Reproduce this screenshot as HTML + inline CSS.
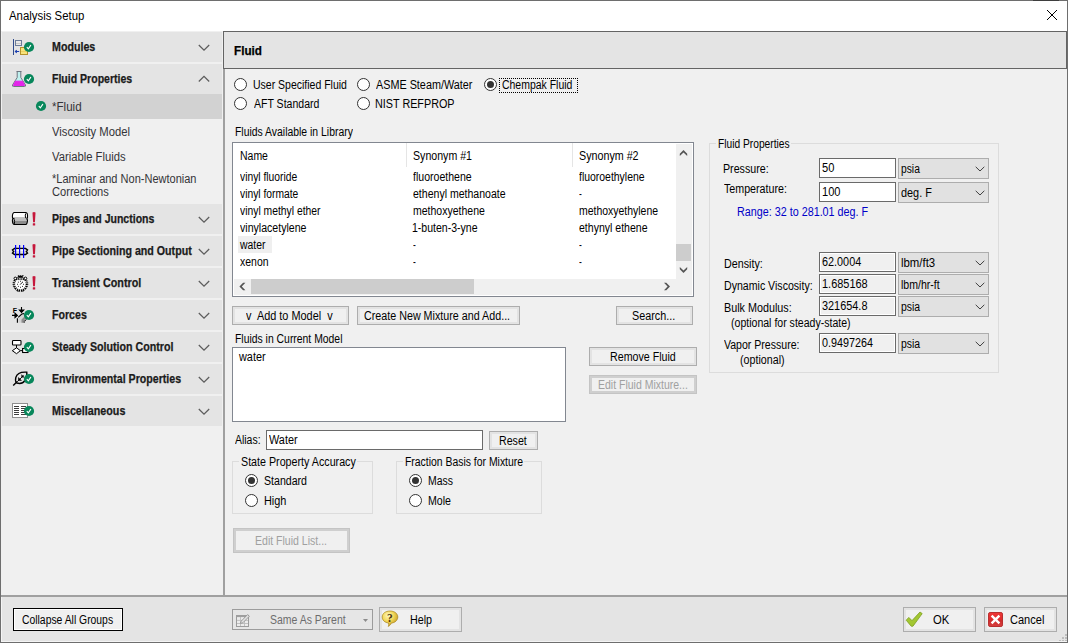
<!DOCTYPE html>
<html><head><meta charset="utf-8"><title>Analysis Setup</title>
<style>
html,body{margin:0;padding:0;background:#fff;}
#win{position:relative;width:1068px;height:643px;overflow:hidden;background:#f0f0f0;font-family:"Liberation Sans",sans-serif;font-size:11px;color:#000;}
#win div,#win svg{position:absolute;box-sizing:border-box;}
.t{position:absolute;white-space:pre;line-height:1;transform-origin:0 0;display:block;}
.row{left:2px;width:220px;height:30px;background:#e4e4e4;}
.btn{border:1px solid #adadad;background:#f0f0f0;box-shadow:inset 0 0 0 2px #e3e3e3;}
.btn.dis{border:1px solid #c4c4c4;box-shadow:inset 0 0 0 2px #cfcfcf;}
.rad{width:13px;height:13px;border-radius:50%;border:1px solid #333;background:#fff;}
.rad.on::after{content:"";position:absolute;left:2px;top:2px;width:7px;height:7px;border-radius:50%;background:#333;}
.lb{border:1px solid #828790;background:#fff;}
.gb{border:1px solid #dcdcdc;}
.inp{border:1px solid #6a6a6a;background:#fff;}
.ro{border:1px solid #6a6a6a;background:#f0f0f0;box-shadow:inset 1px 1px 0 #fff, inset -1px -1px 0 #fff;}
.dd{border:1px solid #adadad;background:#e1e1e1;}
.gl{background:#f0f0f0;height:13px;}

</style></head>
<body>
<div id="win">
<div style="left:1px;top:1px;width:1066px;height:30px;background:#fff"></div>
<svg style="left:1046px;top:9px" width="12" height="12" viewBox="0 0 12 12"><path d="M1 1 L11 11 M11 1 L1 11" stroke="#000" stroke-width="1" fill="none"/></svg>
<div class="row" style="top:32px"></div>
<svg style="left:198px;top:44px" width="12" height="8" viewBox="0 0 12 8"><path d="M0.8 1 L6 6.2 L11.2 1" stroke="#5c5c5c" stroke-width="1.25" fill="none"/></svg>
<div class="row" style="top:64px"></div>
<svg style="left:198px;top:75px" width="12" height="8" viewBox="0 0 12 8"><path d="M0.8 6.5 L6 1.3 L11.2 6.5" stroke="#5c5c5c" stroke-width="1.25" fill="none"/></svg>
<div class="row" style="top:204px"></div>
<svg style="left:198px;top:216px" width="12" height="8" viewBox="0 0 12 8"><path d="M0.8 1 L6 6.2 L11.2 1" stroke="#5c5c5c" stroke-width="1.25" fill="none"/></svg>
<div class="row" style="top:236px"></div>
<svg style="left:198px;top:248px" width="12" height="8" viewBox="0 0 12 8"><path d="M0.8 1 L6 6.2 L11.2 1" stroke="#5c5c5c" stroke-width="1.25" fill="none"/></svg>
<div class="row" style="top:268px"></div>
<svg style="left:198px;top:280px" width="12" height="8" viewBox="0 0 12 8"><path d="M0.8 1 L6 6.2 L11.2 1" stroke="#5c5c5c" stroke-width="1.25" fill="none"/></svg>
<div class="row" style="top:300px"></div>
<svg style="left:198px;top:312px" width="12" height="8" viewBox="0 0 12 8"><path d="M0.8 1 L6 6.2 L11.2 1" stroke="#5c5c5c" stroke-width="1.25" fill="none"/></svg>
<div class="row" style="top:332px"></div>
<svg style="left:198px;top:344px" width="12" height="8" viewBox="0 0 12 8"><path d="M0.8 1 L6 6.2 L11.2 1" stroke="#5c5c5c" stroke-width="1.25" fill="none"/></svg>
<div class="row" style="top:364px"></div>
<svg style="left:198px;top:376px" width="12" height="8" viewBox="0 0 12 8"><path d="M0.8 1 L6 6.2 L11.2 1" stroke="#5c5c5c" stroke-width="1.25" fill="none"/></svg>
<div class="row" style="top:396px"></div>
<svg style="left:198px;top:408px" width="12" height="8" viewBox="0 0 12 8"><path d="M0.8 1 L6 6.2 L11.2 1" stroke="#5c5c5c" stroke-width="1.25" fill="none"/></svg>
<div style="left:2px;top:94px;width:220px;height:25px;background:#d2d2d2"></div>
<div style="left:223px;top:31px;width:844px;height:38px;border:1px solid #646464;background:#e4e4e4"></div>
<div style="left:223px;top:69px;width:2px;height:527px;background:#a0a0a0"></div>
<div style="left:1px;top:595px;width:1066px;height:2px;background:#a0a0a0"></div>
<div style="left:1px;top:597px;width:1066px;height:45px;background:#e4e4e4"></div>
<div class="rad" style="left:234px;top:78px"></div>
<div class="rad" style="left:234px;top:97px"></div>
<div class="rad" style="left:357px;top:78px"></div>
<div class="rad" style="left:357px;top:97px"></div>
<div class="rad on" style="left:484px;top:78px"></div>
<div class="rad on" style="left:245px;top:474px"></div>
<div class="rad" style="left:245px;top:494px"></div>
<div class="rad on" style="left:409px;top:474px"></div>
<div class="rad" style="left:409px;top:494px"></div>
<div style="left:499px;top:78px;width:79px;height:15px;border:1px dotted #000"></div>
<div class="lb" style="left:232px;top:142px;width:462px;height:155px"></div>
<div style="left:406px;top:143px;width:1px;height:24px;background:#e5e5e5"></div>
<div style="left:572px;top:143px;width:1px;height:24px;background:#e5e5e5"></div>
<div style="left:238px;top:236px;width:34px;height:17px;background:#efefef"></div>
<div style="left:676px;top:144px;width:16px;height:151px;background:#f0f0f0"></div>
<div style="left:234px;top:279px;width:442px;height:16px;background:#f0f0f0"></div>
<div style="left:676px;top:244px;width:15px;height:17px;background:#cdcdcd"></div>
<div style="left:251px;top:279px;width:223px;height:15px;background:#cdcdcd"></div>
<div class="btn" style="left:232px;top:306px;width:117px;height:19px"></div>
<div class="btn" style="left:357px;top:306px;width:163px;height:19px"></div>
<div class="btn" style="left:616px;top:306px;width:77px;height:19px"></div>
<div class="lb" style="left:232px;top:347px;width:334px;height:75px"></div>
<div class="btn" style="left:589px;top:347px;width:108px;height:19px"></div>
<div class="btn dis" style="left:589px;top:375px;width:108px;height:19px"></div>
<div class="inp" style="left:266px;top:430px;width:217px;height:20px"></div>
<div class="btn" style="left:489px;top:431px;width:49px;height:19px"></div>
<div class="gb" style="left:232px;top:461px;width:141px;height:53px"></div>
<div class="gl" style="left:239px;top:456px;width:118px"></div>
<div class="gb" style="left:396px;top:461px;width:146px;height:53px"></div>
<div class="gl" style="left:403px;top:456px;width:121px"></div>
<div class="btn dis" style="left:233px;top:528px;width:117px;height:25px"></div>
<div class="gb" style="left:709px;top:143px;width:290px;height:230px"></div>
<div class="gl" style="left:716px;top:138px;width:75px"></div>
<div class="inp" style="left:819px;top:158px;width:77px;height:20px"></div>
<div class="dd" style="left:898px;top:158px;width:91px;height:21px"></div>
<svg style="left:975px;top:165.5px" width="10" height="6" viewBox="0 0 10 6"><path d="M0.7 0.8 L5 5 L9.3 0.8" stroke="#404040" stroke-width="1" fill="none"/></svg>
<div class="inp" style="left:819px;top:182px;width:77px;height:20px"></div>
<div class="dd" style="left:898px;top:182px;width:91px;height:21px"></div>
<svg style="left:975px;top:189.5px" width="10" height="6" viewBox="0 0 10 6"><path d="M0.7 0.8 L5 5 L9.3 0.8" stroke="#404040" stroke-width="1" fill="none"/></svg>
<div class="ro" style="left:819px;top:252px;width:77px;height:20px"></div>
<div class="dd" style="left:898px;top:252px;width:91px;height:21px"></div>
<svg style="left:975px;top:259.5px" width="10" height="6" viewBox="0 0 10 6"><path d="M0.7 0.8 L5 5 L9.3 0.8" stroke="#404040" stroke-width="1" fill="none"/></svg>
<div class="ro" style="left:819px;top:274px;width:77px;height:20px"></div>
<div class="dd" style="left:898px;top:274px;width:91px;height:21px"></div>
<svg style="left:975px;top:281.5px" width="10" height="6" viewBox="0 0 10 6"><path d="M0.7 0.8 L5 5 L9.3 0.8" stroke="#404040" stroke-width="1" fill="none"/></svg>
<div class="ro" style="left:819px;top:296px;width:77px;height:20px"></div>
<div class="dd" style="left:898px;top:296px;width:91px;height:21px"></div>
<svg style="left:975px;top:303.5px" width="10" height="6" viewBox="0 0 10 6"><path d="M0.7 0.8 L5 5 L9.3 0.8" stroke="#404040" stroke-width="1" fill="none"/></svg>
<div class="ro" style="left:819px;top:333px;width:77px;height:20px"></div>
<div class="dd" style="left:898px;top:333px;width:91px;height:21px"></div>
<svg style="left:975px;top:340.5px" width="10" height="6" viewBox="0 0 10 6"><path d="M0.7 0.8 L5 5 L9.3 0.8" stroke="#404040" stroke-width="1" fill="none"/></svg>
<div style="left:13px;top:608px;width:110px;height:23px;border:1px solid #000;background:#f0f0f0;box-shadow:inset 0 0 0 1px #fff"></div>
<div style="left:232px;top:609px;width:141px;height:21px;border:1px solid #9c9c9c;background:#e6e6e6"></div>
<div class="btn" style="left:379px;top:607px;width:83px;height:25px"></div>
<div class="btn" style="left:903px;top:607px;width:73px;height:25px"></div>
<div class="btn" style="left:984px;top:607px;width:73px;height:25px"></div>
<svg style="left:0;top:0" width="1068" height="643" viewBox="0 0 1068 643"><polygon points="683.5,150 687.2,153.7 687.2,156 683.5,152.4 679.8,156 679.8,153.7" fill="#555"/>
<polygon points="683.5,273 687.2,269.3 687.2,267 683.5,270.6 679.8,267 679.8,269.3" fill="#555"/>
<polygon points="670,286.5 666.3,282.8 664,282.8 667.6,286.5 664,290.2 666.3,290.2" fill="#555"/>
<polygon points="239.4,286.5 243.1,282.8 245.4,282.8 241.8,286.5 245.4,290.2 243.1,290.2" fill="#555"/>
<rect x="13" y="39" width="1" height="16" fill="#2f4b8c"/>
<rect x="15.5" y="40.5" width="6" height="5" fill="#e9e9e9" stroke="#6b7b98" stroke-width="1"/>
<rect x="16" y="43" width="5" height="1" fill="#c8c8c8"/>
<path d="M15.4 51.5 L19.2 51.5 M16.7 50.2 L15.4 51.5 L16.7 52.8" stroke="#1b3fb0" stroke-width="1.1" fill="none"/>
<rect x="20.5" y="47.5" width="7" height="7" fill="#f8e47c" stroke="#b4922c" stroke-width="1"/>
<rect x="21" y="51" width="6" height="1" fill="#ecd060"/>
<circle cx="29" cy="47" r="5.1" fill="#08875b"/>
<path d="M27.1 47.4 L28.4 48.8 L30.7 45.4" stroke="#fff" stroke-width="1.1" fill="none" stroke-linecap="round" stroke-linejoin="round"/>
<path d="M16.5 71.5 L21.5 71.5 M17.2 71.5 L17.2 77.5 L12.5 85 Q12 86.5 13.5 86.5 L24.5 86.5 Q26 86.5 25.5 85 L20.8 77.5 L20.8 71.5" fill="#bff0ee" stroke="#69717b" stroke-width="0.95" stroke-linejoin="round"/>
<path d="M15.2 80.8 L22.8 80.8 L25 85 Q25.4 86 24.3 86 L13.7 86 Q12.6 86 13 85 Z" fill="#e326ea"/>
<path d="M15.6 80.6 L22.4 80.6" stroke="#c9a0ee" stroke-width="0.8"/>
<circle cx="29" cy="79" r="5.1" fill="#08875b"/>
<path d="M27.1 79.4 L28.4 80.8 L30.7 77.4" stroke="#fff" stroke-width="1.1" fill="none" stroke-linecap="round" stroke-linejoin="round"/>
<defs><linearGradient id="pg" x1="0" y1="0" x2="0" y2="1"><stop offset="0" stop-color="#fff"/><stop offset="0.35" stop-color="#fff"/><stop offset="0.36" stop-color="#c4c4c4"/><stop offset="0.72" stop-color="#bcbcbc"/><stop offset="0.73" stop-color="#8c8c8c"/><stop offset="1" stop-color="#8c8c8c"/></linearGradient></defs>
<path d="M14 212.5 L26 212.5 Q27.5 213 27.5 215 L27.5 217.5 Q27.5 218.5 26.5 218.7 Q27.6 219 27.5 220.5 L27.3 222 Q27 224 26 224.5 L14 224.5 Q12.8 224 12.6 222.5 L12.4 220.5 Q12.3 219 13.4 218.6 Q12.3 218.3 12.4 217 L12.5 215 Q12.6 213.2 14 212.5 Z" fill="url(#pg)" stroke="#000" stroke-width="1.1"/>
<path d="M25.6 213.5 Q24.8 216 25.8 218.2" stroke="#000" stroke-width="1" fill="none"/>
<path d="M14.2 219.3 Q15 221.5 14.2 224" stroke="#000" stroke-width="1" fill="none"/>
<path d="M32.5 212.6 Q34 211.4 35.5 212.6 L34.9 222.3 L33.1 222.3 Z" fill="#c6183c"/>
<rect x="32.8" y="223.2" width="2.4" height="2.4" rx="0.4" fill="#c6183c"/>
<path d="M14.5 248.5 L25.5 248.5 L27.5 250 L26.3 251.5 L27.5 253 L25.5 254.5 L14.5 254.5 L12.5 253 L13.7 251.5 L12.5 250 Z" fill="#e0e0d8" stroke="#000" stroke-width="1.4"/>
<rect x="16" y="249.3" width="9" height="1.4" fill="#fff"/>
<rect x="15" y="245" width="1.2" height="13" fill="#0000ff"/>
<rect x="19" y="245" width="1.2" height="13" fill="#0000ff"/>
<rect x="23" y="245" width="1.2" height="13" fill="#0000ff"/>
<path d="M32.5 244.6 Q34 243.4 35.5 244.6 L34.9 254.3 L33.1 254.3 Z" fill="#c6183c"/>
<rect x="32.8" y="255.2" width="2.4" height="2.4" rx="0.4" fill="#c6183c"/>
<circle cx="20.4" cy="284" r="6.3" fill="#fff" stroke="#000" stroke-width="2" stroke-dasharray="1.1 0.9"/>
<circle cx="20.4" cy="284" r="7.4" fill="none" stroke="#000" stroke-width="0.9" stroke-dasharray="1 1"/>
<path d="M16.8 275 L17.8 276 L18.8 275 L19.8 276 L20.8 275 L21.8 276 L22.8 275 L23.8 275 L22 277.6 L18.8 277.6 Z" fill="#000"/>
<circle cx="15.3" cy="278.4" r="1.3" fill="#fff" stroke="#000" stroke-width="1"/><circle cx="25.5" cy="278.4" r="1.3" fill="#fff" stroke="#000" stroke-width="1"/>
<path d="M16 279.6 L24.8 279.6" stroke="#000" stroke-width="0.9" stroke-dasharray="1.4 0.8"/>
<path d="M20.2 284.6 L22.2 282.4" stroke="#000" stroke-width="0.9"/>
<rect x="20.0" y="280.8" width="0.9" height="0.9" fill="#000"/>
<rect x="22.1" y="281.7" width="0.9" height="0.9" fill="#000"/>
<rect x="23.0" y="283.8" width="0.9" height="0.9" fill="#000"/>
<rect x="22.1" y="285.9" width="0.9" height="0.9" fill="#000"/>
<rect x="20.0" y="286.8" width="0.9" height="0.9" fill="#000"/>
<rect x="17.9" y="285.9" width="0.9" height="0.9" fill="#000"/>
<rect x="17.0" y="283.8" width="0.9" height="0.9" fill="#000"/>
<rect x="17.9" y="281.7" width="0.9" height="0.9" fill="#000"/>
<path d="M16.5 290.6 L19 291.2 M24.2 290.6 L21.8 291.2" stroke="#000" stroke-width="0.9"/>
<path d="M32.5 276.6 Q34 275.4 35.5 276.6 L34.9 286.3 L33.1 286.3 Z" fill="#c6183c"/>
<rect x="32.8" y="287.2" width="2.4" height="2.4" rx="0.4" fill="#c6183c"/>
<text x="12.8" y="312.8" font-family="Liberation Sans, sans-serif" font-size="7" font-weight="700" fill="#000">F</text>
<path d="M21.5 307 L21.5 312 M19.3 310 L21.5 312.4 L23.7 310 Z" stroke="#000" stroke-width="1.1" fill="#000"/>
<path d="M12 315.4 L17 315.4 M15 313.2 L17.4 315.4 L15 317.6 Z" stroke="#000" stroke-width="1.1" fill="#000"/>
<path d="M18.5 322.8 L18.5 318.5 L22.5 314.5 L26 314.5 L26 319.5 L24.5 319.5 L24.5 322.8 Z" fill="#d4d4d4"/>
<path d="M21.5 322.8 L21.5 319.5 L24.5 316.5 L26 316.5 L26 319.5 L24.5 319.5 L24.5 322.8 Z" fill="#8e8e8e"/>
<path d="M17.4 322.8 L17.4 318.2 M18.2 317.4 L21.8 314 L24 313.6" stroke="#000" stroke-width="1.1" fill="none"/>
<path d="M24.3 322.6 L24.3 321.4 L26.4 319.2" stroke="#000" stroke-width="1.1" fill="none" stroke-dasharray="1.2 0.7"/>
<circle cx="29" cy="315" r="5.1" fill="#08875b"/>
<path d="M27.1 315.4 L28.4 316.8 L30.7 313.4" stroke="#fff" stroke-width="1.1" fill="none" stroke-linecap="round" stroke-linejoin="round"/>
<rect x="12.5" y="340.5" width="8.5" height="4.5" rx="0.8" fill="#fff" stroke="#000" stroke-width="1.1"/>
<path d="M16.5 345 L16.5 348" stroke="#000" stroke-width="1"/>
<path d="M16.5 347.8 L20.4 350.7 L16.5 353.7 L12.3 350.7 Z" fill="#fff" stroke="#000" stroke-width="1"/>
<path d="M20.4 350.6 L22.6 350.6" stroke="#000" stroke-width="1"/>
<rect x="22.6" y="348.5" width="5.4" height="4" fill="#fff" stroke="#000" stroke-width="1.1"/>
<circle cx="29" cy="347" r="5.1" fill="#08875b"/>
<path d="M27.1 347.4 L28.4 348.8 L30.7 345.4" stroke="#fff" stroke-width="1.1" fill="none" stroke-linecap="round" stroke-linejoin="round"/>
<path d="M26.8 372.2 Q17.5 371.5 15.8 377.5 Q14.8 381.5 16.8 383 Q22 384.6 25 380.5 Q27.4 377 26.8 372.2 Z" fill="none" stroke="#000" stroke-width="1.35"/>
<path d="M13.2 385.6 L17.6 381.2" stroke="#000" stroke-width="1.4"/>
<path d="M18 381 L23.6 375.4" stroke="#000" stroke-width="0.9"/>
<path d="M18.2 377 L18.2 380.8 L22 380.8 Z M21.4 374.2 L21.4 377.6 L24.8 377.6 Z" fill="#000"/>
<circle cx="29" cy="379" r="5.1" fill="#08875b"/>
<path d="M27.1 379.4 L28.4 380.8 L30.7 377.4" stroke="#fff" stroke-width="1.1" fill="none" stroke-linecap="round" stroke-linejoin="round"/>
<rect x="12.5" y="403.5" width="15" height="14" fill="#fff" stroke="#8e8e8e" stroke-width="1"/>
<rect x="14" y="406" width="5" height="1" fill="#3c3c3c"/><rect x="21" y="406" width="5" height="1" fill="#3c3c3c"/>
<rect x="14" y="408" width="5" height="1" fill="#3c3c3c"/><rect x="21" y="408" width="5" height="1" fill="#3c3c3c"/>
<rect x="14" y="410" width="5" height="1" fill="#3c3c3c"/><rect x="21" y="410" width="5" height="1" fill="#3c3c3c"/>
<rect x="14" y="412" width="5" height="1" fill="#3c3c3c"/><rect x="21" y="412" width="5" height="1" fill="#3c3c3c"/>
<rect x="14" y="414" width="5" height="1" fill="#3c3c3c"/><rect x="21" y="414" width="5" height="1" fill="#3c3c3c"/>
<circle cx="29" cy="411" r="5.1" fill="#08875b"/>
<path d="M27.1 411.4 L28.4 412.8 L30.7 409.4" stroke="#fff" stroke-width="1.1" fill="none" stroke-linecap="round" stroke-linejoin="round"/>
<circle cx="41" cy="106" r="5.1" fill="#08875b"/>
<path d="M39.1 106.4 L40.4 107.8 L42.7 104.4" stroke="#fff" stroke-width="1.1" fill="none" stroke-linecap="round" stroke-linejoin="round"/>
<rect x="236.5" y="615.5" width="12" height="11" fill="#ececec" stroke="#9c9c9c" stroke-width="1"/>
<rect x="236.5" y="615.3" width="12" height="1.8" fill="#a0a0a0"/>
<path d="M237 620.4 L248 620.4 M237 623.5 L248 623.5 M240.5 617 L240.5 626 M244.5 617 L244.5 626" fill="none" stroke="#bcbcbc" stroke-width="0.9"/>
<path d="M240.4 623.4 L241.2 621.2 L247.6 614.6 L249.4 616.2 L242.8 622.8 Z" fill="#e2e2e2" stroke="#8c8c8c" stroke-width="0.8"/>
<path d="M363 619 L368 619 L365.5 622 Z" fill="#8c8c8c"/>
<defs><radialGradient id="hg" cx="0.38" cy="0.3" r="0.8"><stop offset="0" stop-color="#fff8c0"/><stop offset="0.45" stop-color="#f2d858"/><stop offset="1" stop-color="#b88a18"/></radialGradient></defs>
<path d="M390 611 C394.6 611 397.8 613.6 397.8 617 C397.8 620.4 394.8 622.8 391.4 623.1 C390.6 624.8 389.6 625.8 388.2 626.4 C388.8 625.2 388.8 624.2 388.4 623 C384.8 622.6 382.2 620.2 382.2 617 C382.2 613.6 385.4 611 390 611 Z" fill="url(#hg)" stroke="#a88418" stroke-width="0.7"/>
<text x="386.9" y="621.6" font-family="Liberation Serif, serif" font-size="11.5" font-weight="700" fill="#4a3410">?</text>
<path d="M906.2 620.2 L908.8 617.4 L912 620.6 L920 612 L922.2 613.6 L913 626.2 L911.2 626.2 Z" fill="#a3c732" stroke="#7e9e22" stroke-width="0.8" stroke-linejoin="round"/>
<defs><linearGradient id="cg" x1="0" y1="0" x2="0" y2="1"><stop offset="0" stop-color="#ee3838"/><stop offset="0.5" stop-color="#e02c2c"/><stop offset="0.51" stop-color="#cc2a2a"/><stop offset="1" stop-color="#d84040"/></linearGradient></defs>
<rect x="988.5" y="612.5" width="14" height="14" rx="1.6" fill="url(#cg)" stroke="#b83030" stroke-width="1"/>
<path d="M991.6 615.6 L999.4 623.4 M999.4 615.6 L991.6 623.4" stroke="#fff" stroke-width="2.4"/>
<rect x="1065" y="634" width="2" height="2" fill="#bdbdbd"/>
<rect x="1062" y="637" width="2" height="2" fill="#bdbdbd"/>
<rect x="1065" y="637" width="2" height="2" fill="#bdbdbd"/>
<rect x="1059" y="640" width="2" height="2" fill="#bdbdbd"/>
<rect x="1062" y="640" width="2" height="2" fill="#bdbdbd"/>
<rect x="1065" y="640" width="2" height="2" fill="#bdbdbd"/></svg>
<div style="left:1px;top:597px;width:1px;height:45px;background:#f4f4f4"></div><div style="left:1px;top:641px;width:1066px;height:1px;background:#f4f4f4"></div>
<div style="left:0;top:0;width:1068px;height:643px;border:1px solid #6e6e6e;pointer-events:none"></div>
<div style="left:1033px;top:0;width:26px;height:1px;background:#3e3e3e"></div>
<!-- text -->
<span class="t" style="left:9.0px;top:10px;font-size:12px;transform:scaleX(0.9494)">Analysis Setup</span>
<span class="t" style="left:52.1px;top:41px;font-size:12px;transform:scaleX(0.8884);font-weight:700;-webkit-text-stroke:0.25px #1b1b1b;color:#1b1b1b">Modules</span>
<span class="t" style="left:51.9px;top:73px;font-size:12px;transform:scaleX(0.8776);font-weight:700;-webkit-text-stroke:0.25px #1b1b1b;color:#1b1b1b">Fluid Properties</span>
<span class="t" style="left:52.1px;top:213px;font-size:12px;transform:scaleX(0.8771);font-weight:700;-webkit-text-stroke:0.25px #1b1b1b;color:#1b1b1b">Pipes and Junctions</span>
<span class="t" style="left:52.1px;top:245px;font-size:12px;transform:scaleX(0.8882);font-weight:700;-webkit-text-stroke:0.25px #1b1b1b;color:#1b1b1b">Pipe Sectioning and Output</span>
<span class="t" style="left:52.4px;top:277px;font-size:12px;transform:scaleX(0.8985);font-weight:700;-webkit-text-stroke:0.25px #1b1b1b;color:#1b1b1b">Transient Control</span>
<span class="t" style="left:52.1px;top:309px;font-size:12px;transform:scaleX(0.8837);font-weight:700;-webkit-text-stroke:0.25px #1b1b1b;color:#1b1b1b">Forces</span>
<span class="t" style="left:52.4px;top:341px;font-size:12px;transform:scaleX(0.8887);font-weight:700;-webkit-text-stroke:0.25px #1b1b1b;color:#1b1b1b">Steady Solution Control</span>
<span class="t" style="left:52.1px;top:373px;font-size:12px;transform:scaleX(0.8836);font-weight:700;-webkit-text-stroke:0.25px #1b1b1b;color:#1b1b1b">Environmental Properties</span>
<span class="t" style="left:52.1px;top:405px;font-size:12px;transform:scaleX(0.8941);font-weight:700;-webkit-text-stroke:0.25px #1b1b1b;color:#1b1b1b">Miscellaneous</span>
<span class="t" style="left:51.8px;top:101px;font-size:12px;transform:scaleX(0.9647);color:#343438">*Fluid</span>
<span class="t" style="left:52.0px;top:126px;font-size:12px;transform:scaleX(0.9382);color:#343438">Viscosity Model</span>
<span class="t" style="left:52.0px;top:151px;font-size:12px;transform:scaleX(0.9385);color:#343438">Variable Fluids</span>
<span class="t" style="left:51.8px;top:173px;font-size:12px;transform:scaleX(0.9176);color:#343438">*Laminar and Non-Newtonian</span>
<span class="t" style="left:51.5px;top:186px;font-size:12px;transform:scaleX(0.9256);color:#343438">Corrections</span>
<span class="t" style="left:233.8px;top:45px;font-size:12px;transform:scaleX(0.9741);font-weight:700;-webkit-text-stroke:0.25px #000">Fluid</span>
<span class="t" style="left:252.6px;top:79px;font-size:12px;transform:scaleX(0.8749)">User Specified Fluid</span>
<span class="t" style="left:253.5px;top:98px;font-size:12px;transform:scaleX(0.8773)">AFT Standard</span>
<span class="t" style="left:376.2px;top:79px;font-size:12px;transform:scaleX(0.9012)">ASME Steam/Water</span>
<span class="t" style="left:375.3px;top:98px;font-size:12px;transform:scaleX(0.8991)">NIST REFPROP</span>
<span class="t" style="left:502.2px;top:79px;font-size:12px;transform:scaleX(0.8717)">Chempak Fluid</span>
<span class="t" style="left:234.5px;top:126px;font-size:12px;transform:scaleX(0.8675)">Fluids Available in Library</span>
<span class="t" style="left:239.6px;top:150px;font-size:12px;transform:scaleX(0.8721)">Name</span>
<span class="t" style="left:413.0px;top:150px;font-size:12px;transform:scaleX(0.8840)">Synonym #1</span>
<span class="t" style="left:578.7px;top:150px;font-size:12px;transform:scaleX(0.8931)">Synonym #2</span>
<span class="t" style="left:240.3px;top:171px;font-size:12px;transform:scaleX(0.8574)">vinyl fluoride</span>
<span class="t" style="left:413.0px;top:171px;font-size:12px;transform:scaleX(0.8803)">fluoroethene</span>
<span class="t" style="left:579.0px;top:171px;font-size:12px;transform:scaleX(0.8698)">fluoroethylene</span>
<span class="t" style="left:240.3px;top:188px;font-size:12px;transform:scaleX(0.8563)">vinyl formate</span>
<span class="t" style="left:412.8px;top:188px;font-size:12px;transform:scaleX(0.8785)">ethenyl methanoate</span>
<span class="t" style="left:578.9px;top:188px;font-size:12px;transform:scaleX(0.7000)">-</span>
<span class="t" style="left:240.3px;top:205px;font-size:12px;transform:scaleX(0.8622)">vinyl methyl ether</span>
<span class="t" style="left:412.5px;top:205px;font-size:12px;transform:scaleX(0.8755)">methoxyethene</span>
<span class="t" style="left:578.5px;top:205px;font-size:12px;transform:scaleX(0.8715)">methoxyethylene</span>
<span class="t" style="left:240.3px;top:222px;font-size:12px;transform:scaleX(0.8816)">vinylacetylene</span>
<span class="t" style="left:412.3px;top:222px;font-size:12px;transform:scaleX(0.8778)">1-buten-3-yne</span>
<span class="t" style="left:578.8px;top:222px;font-size:12px;transform:scaleX(0.8779)">ethynyl ethene</span>
<span class="t" style="left:240.3px;top:239px;font-size:12px;transform:scaleX(0.8650)">water</span>
<span class="t" style="left:412.8px;top:239px;font-size:12px;transform:scaleX(0.7000)">-</span>
<span class="t" style="left:578.9px;top:239px;font-size:12px;transform:scaleX(0.7000)">-</span>
<span class="t" style="left:240.1px;top:256px;font-size:12px;transform:scaleX(0.8724)">xenon</span>
<span class="t" style="left:412.8px;top:256px;font-size:12px;transform:scaleX(0.7000)">-</span>
<span class="t" style="left:578.9px;top:256px;font-size:12px;transform:scaleX(0.7000)">-</span>
<span class="t" style="left:245.7px;top:310px;font-size:12px;transform:scaleX(0.9081)">v  Add to Model  v</span>
<span class="t" style="left:364.1px;top:310px;font-size:12px;transform:scaleX(0.8940)">Create New Mixture and Add...</span>
<span class="t" style="left:632.0px;top:310px;font-size:12px;transform:scaleX(0.8989)">Search...</span>
<span class="t" style="left:234.5px;top:333px;font-size:12px;transform:scaleX(0.8663)">Fluids in Current Model</span>
<span class="t" style="left:238.8px;top:351px;font-size:12px;transform:scaleX(0.9060)">water</span>
<span class="t" style="left:609.9px;top:351px;font-size:12px;transform:scaleX(0.8886)">Remove Fluid</span>
<span class="t" style="left:597.5px;top:379px;font-size:12px;transform:scaleX(0.8744);color:#a0a0a0">Edit Fluid Mixture...</span>
<span class="t" style="left:235.0px;top:434px;font-size:12px;transform:scaleX(0.8708)">Alias:</span>
<span class="t" style="left:269.4px;top:434px;font-size:12px;transform:scaleX(0.9048)">Water</span>
<span class="t" style="left:499.1px;top:435px;font-size:12px;transform:scaleX(0.8860)">Reset</span>
<span class="t" style="left:240.6px;top:456px;font-size:12px;transform:scaleX(0.8920)">State Property Accuracy</span>
<span class="t" style="left:264.0px;top:475px;font-size:12px;transform:scaleX(0.8821)">Standard</span>
<span class="t" style="left:263.5px;top:495px;font-size:12px;transform:scaleX(0.9087)">High</span>
<span class="t" style="left:404.8px;top:456px;font-size:12px;transform:scaleX(0.8677)">Fraction Basis for Mixture</span>
<span class="t" style="left:427.6px;top:475px;font-size:12px;transform:scaleX(0.8697)">Mass</span>
<span class="t" style="left:427.6px;top:495px;font-size:12px;transform:scaleX(0.8816)">Mole</span>
<span class="t" style="left:254.9px;top:535px;font-size:12px;transform:scaleX(0.8775);color:#a0a0a0">Edit Fluid List...</span>
<span class="t" style="left:717.7px;top:138px;font-size:12px;transform:scaleX(0.8520)">Fluid Properties</span>
<span class="t" style="left:723.3px;top:163px;font-size:12px;transform:scaleX(0.8893)">Pressure:</span>
<span class="t" style="left:821.8px;top:162px;font-size:12px;transform:scaleX(0.9280)">50</span>
<span class="t" style="left:901.2px;top:163px;font-size:12px;transform:scaleX(0.8565)">psia</span>
<span class="t" style="left:724.0px;top:183px;font-size:12px;transform:scaleX(0.8892)">Temperature:</span>
<span class="t" style="left:822.0px;top:186px;font-size:12px;transform:scaleX(0.9243)">100</span>
<span class="t" style="left:901.3px;top:187px;font-size:12px;transform:scaleX(0.9061)">deg. F</span>
<span class="t" style="left:737.0px;top:206px;font-size:12px;transform:scaleX(0.8974);color:#0000c8">Range: 32 to 281.01 deg. F</span>
<span class="t" style="left:723.8px;top:258px;font-size:12px;transform:scaleX(0.8945)">Density:</span>
<span class="t" style="left:821.8px;top:256px;font-size:12px;transform:scaleX(0.9035)">62.0004</span>
<span class="t" style="left:901.3px;top:257px;font-size:12px;transform:scaleX(0.9496)">lbm/ft3</span>
<span class="t" style="left:723.8px;top:280px;font-size:12px;transform:scaleX(0.8822)">Dynamic Viscosity:</span>
<span class="t" style="left:822.0px;top:278px;font-size:12px;transform:scaleX(0.9134)">1.685168</span>
<span class="t" style="left:901.3px;top:279px;font-size:12px;transform:scaleX(0.8786)">lbm/hr-ft</span>
<span class="t" style="left:723.8px;top:302px;font-size:12px;transform:scaleX(0.8983)">Bulk Modulus:</span>
<span class="t" style="left:821.8px;top:300px;font-size:12px;transform:scaleX(0.9082)">321654.8</span>
<span class="t" style="left:901.1px;top:301px;font-size:12px;transform:scaleX(0.8706)">psia</span>
<span class="t" style="left:731.4px;top:317px;font-size:12px;transform:scaleX(0.8788)">(optional for steady-state)</span>
<span class="t" style="left:724.2px;top:339px;font-size:12px;transform:scaleX(0.8791)">Vapor Pressure:</span>
<span class="t" style="left:821.9px;top:337px;font-size:12px;transform:scaleX(0.8982)">0.9497264</span>
<span class="t" style="left:901.1px;top:338px;font-size:12px;transform:scaleX(0.8706)">psia</span>
<span class="t" style="left:739.7px;top:354px;font-size:12px;transform:scaleX(0.8907)">(optional)</span>
<span class="t" style="left:21.6px;top:614px;font-size:12px;transform:scaleX(0.8641)">Collapse All Groups</span>
<span class="t" style="left:269.7px;top:614px;font-size:12px;transform:scaleX(0.8719);color:#6d6d6d">Same As Parent</span>
<span class="t" style="left:409.8px;top:614px;font-size:12px;transform:scaleX(0.8946)">Help</span>
<span class="t" style="left:933.3px;top:614px;font-size:12px;transform:scaleX(0.9394)">OK</span>
<span class="t" style="left:1009.8px;top:614px;font-size:12px;transform:scaleX(0.9194)">Cancel</span>
</div>
</body></html>
